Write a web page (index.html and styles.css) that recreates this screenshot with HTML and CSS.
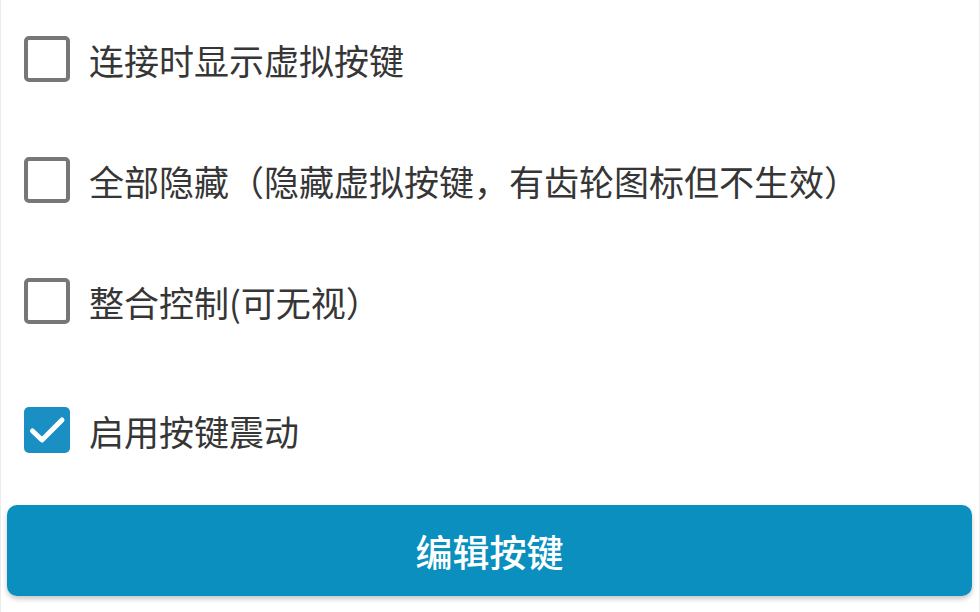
FILE: index.html
```html
<!DOCTYPE html>
<html lang="zh-CN">
<head>
<meta charset="utf-8">
<title>按键设置</title>
<link rel="stylesheet" href="styles.css">
</head>
<body>
<div class="panel">
  <div class="list">
    <label class="row">
      <span class="box"></span>
      <span class="label">连接时显示虚拟按键</span>
    </label>
    <label class="row">
      <span class="box"></span>
      <span class="label">全部隐藏（隐藏虚拟按键，有齿轮图标但不生效）</span>
    </label>
    <label class="row">
      <span class="box"></span>
      <span class="label">整合控制(可无视）</span>
    </label>
    <label class="row row-last">
      <span class="box box-checked">
        <svg viewBox="0 0 46 46" width="46" height="46"><polyline points="8.5,24 18,33 38,13" fill="none" stroke="#fff" stroke-width="5" stroke-linecap="round" stroke-linejoin="round"/></svg>
      </span>
      <span class="label">启用按键震动</span>
    </label>
  </div>
  <button class="edit-btn">编辑按键</button>
</div>
</body>
</html>
```

FILE: styles.css
```css
html, body {
  margin: 0;
  padding: 0;
  background: #ffffff;
}
body {
  font-family: "Noto Sans CJK SC", "Noto Sans", sans-serif;
  color: #333333;
}
.panel {
  box-sizing: border-box;
  width: 980px;
  height: 612px;
  border-left: 1px solid #ececec;
  border-right: 1px solid #ececec;
  display: flex;
  flex-direction: column;
}
.list {
  display: flex;
  flex-direction: column;
  gap: 75px;
  padding: 36px 0 0 23px;
}
.row {
  display: flex;
  align-items: center;
  height: 46px;
}
.row-last {
  margin-top: 8px;
}
.box {
  box-sizing: border-box;
  width: 46px;
  height: 46px;
  border: 4px solid #777777;
  border-radius: 5px;
  flex: none;
  display: flex;
  align-items: center;
  justify-content: center;
}
.box-checked {
  background: #1a8fc3;
  border: none;
}
.box-checked svg {
  display: block;
}
.label {
  margin-left: 19px;
  font-size: 35px;
  line-height: 46px;
  padding-top: 2px;
  color: #363636;
  white-space: nowrap;
}
.edit-btn {
  margin: 52px 7px 0 6px;
  height: 91px;
  border: none;
  border-radius: 10px;
  background: #0a8fbf;
  color: #ffffff;
  font-family: "Noto Sans CJK SC", "Noto Sans", sans-serif;
  font-size: 37px;
  font-weight: 500;
  box-shadow: 0 3px 5px rgba(0, 0, 0, 0.22);
  padding: 0;
}
```
